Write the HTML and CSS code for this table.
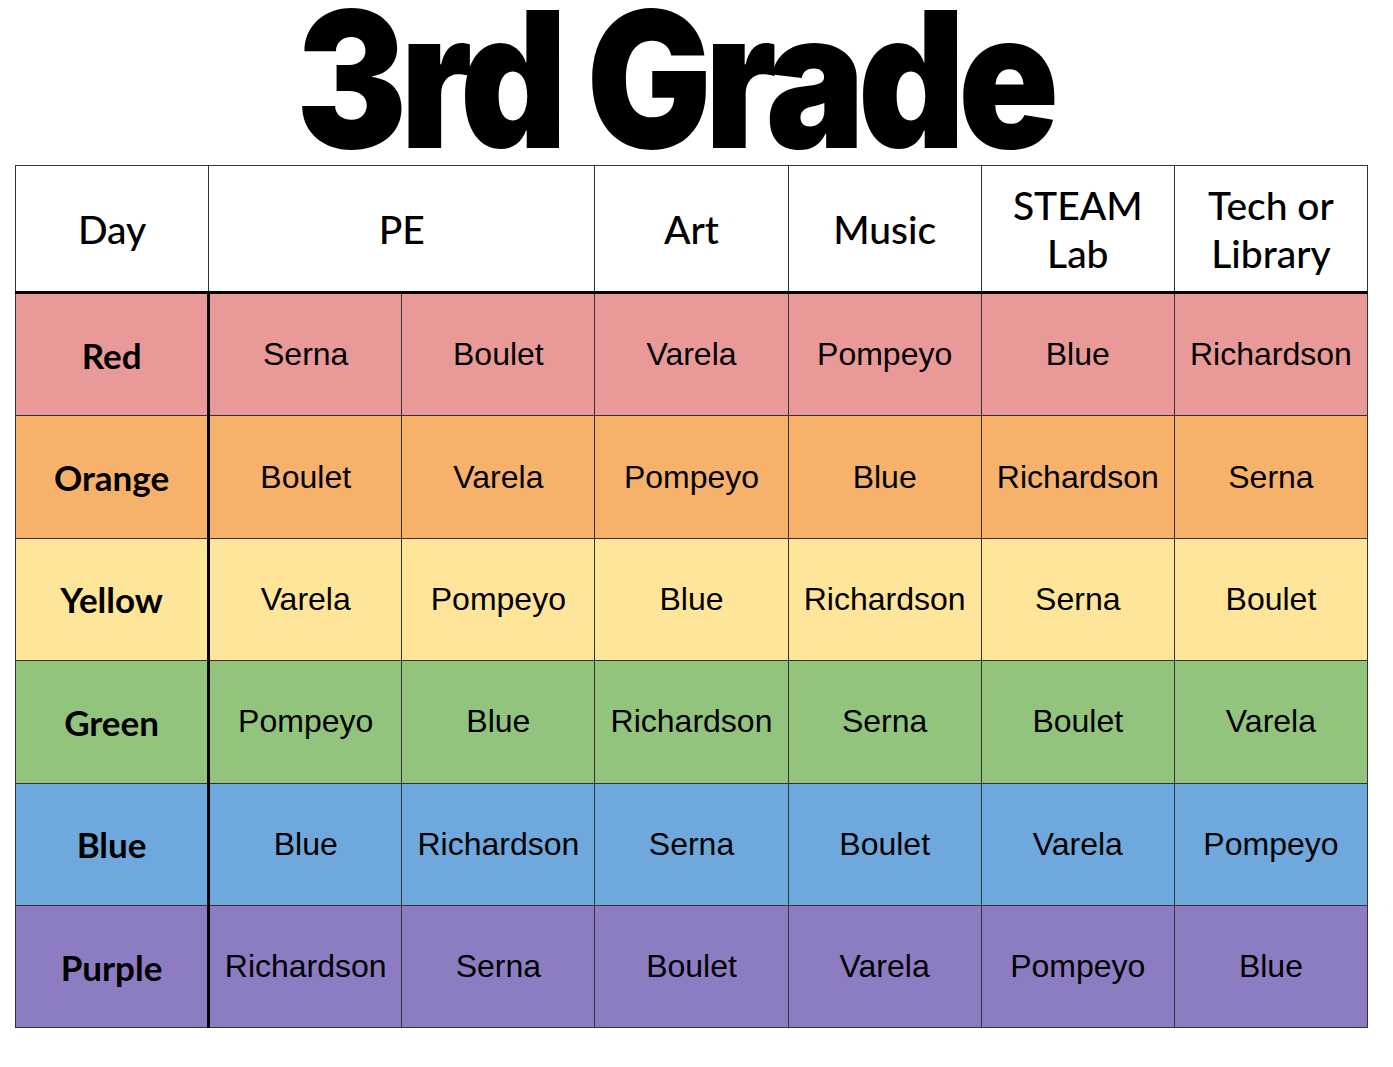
FILE: index.html
```html
<!DOCTYPE html>
<html>
<head>
<meta charset="utf-8">
<link rel="stylesheet" href="styles.css">
</head>
<body>
<h1 class="title">3rd Grade</h1>
<table class="schedule">
  <colgroup>
    <col><col><col><col><col><col><col>
  </colgroup>
  <thead>
    <tr>
      <th>Day</th>
      <th colspan="2">PE</th>
      <th>Art</th>
      <th>Music</th>
      <th>STEAM<br>Lab</th>
      <th>Tech or<br>Library</th>
    </tr>
  </thead>
  <tbody>
    <tr class="red">
      <td class="day">Red</td><td>Serna</td><td>Boulet</td><td>Varela</td><td>Pompeyo</td><td>Blue</td><td>Richardson</td>
    </tr>
    <tr class="orange">
      <td class="day">Orange</td><td>Boulet</td><td>Varela</td><td>Pompeyo</td><td>Blue</td><td>Richardson</td><td>Serna</td>
    </tr>
    <tr class="yellow">
      <td class="day">Yellow</td><td>Varela</td><td>Pompeyo</td><td>Blue</td><td>Richardson</td><td>Serna</td><td>Boulet</td>
    </tr>
    <tr class="green">
      <td class="day">Green</td><td>Pompeyo</td><td>Blue</td><td>Richardson</td><td>Serna</td><td>Boulet</td><td>Varela</td>
    </tr>
    <tr class="blue">
      <td class="day">Blue</td><td>Blue</td><td>Richardson</td><td>Serna</td><td>Boulet</td><td>Varela</td><td>Pompeyo</td>
    </tr>
    <tr class="purple">
      <td class="day">Purple</td><td>Richardson</td><td>Serna</td><td>Boulet</td><td>Varela</td><td>Pompeyo</td><td>Blue</td>
    </tr>
  </tbody>
</table>
</body>
</html>
```
FILE: styles.css
```css
html, body {
  margin: 0;
  padding: 0;
  background: #ffffff;
}
body {
  padding: 0 0 0 15px;
}
.title {
  margin: 0;
  height: 165px;
  font-family: "Inter", "DejaVu Sans", sans-serif;
  font-weight: 900;
  font-size: 190px;
  line-height: 158px;
  letter-spacing: -8px;
  text-align: center;
  width: 1352px;
  color: #000;
  transform: translateX(-17px) scaleX(0.875);
}
.schedule {
  border-collapse: collapse;
  table-layout: fixed;
  width: 1353px;
}
.schedule col {
  width: 193px;
}
.schedule th,
.schedule td {
  border: 1px solid #333;
  text-align: center;
  vertical-align: middle;
  padding: 0;
  color: #000;
}
.schedule th {
  height: 125px;
  font-family: "Lato", "DejaVu Sans", sans-serif;
  font-weight: 500;
  font-size: 39px;
  line-height: 48px;
  background: #fff;
  border-bottom: 3px solid #000;
}
.schedule td {
  height: 121.4px;
  font-family: "Liberation Sans", Arial, sans-serif;
  font-size: 32px;
}
.schedule td.day {
  font-family: "Lato", "DejaVu Sans", sans-serif;
  font-weight: 700;
  font-size: 35px;
  border-right: 3px solid #000;
}
.red td { background: #ea9999; }
.orange td { background: #f6b26b; }
.yellow td { background: #ffe599; }
.green td { background: #93c47d; }
.blue td { background: #6fa8dc; }
.purple td { background: #8e7cc3; }
```
